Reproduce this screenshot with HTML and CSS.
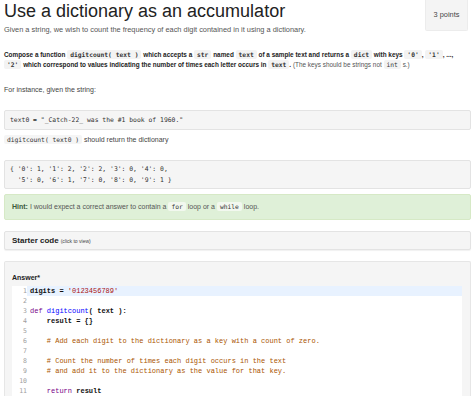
FILE: index.html
```html
<!DOCTYPE html>
<html>
<head>
<meta charset="utf-8">
<link rel="stylesheet" href="styles.css">
</head>
<body>
<div class="page">
  <div class="header">
    <div class="heading">
      <h1 class="title">Use a dictionary as an accumulator</h1>
      <p class="subtitle">Given a string, we wish to count the frequency of each digit contained in it using a dictionary.</p>
    </div>
    <div class="points">3 points</div>
  </div>

  <p class="task"><b>Compose a function <code>digitcount( text )</code> which accepts a <code>str</code> named <code>text</code> of a sample text and returns a <code>dict</code> with keys <code>'0'</code>, <code>'1'</code>, ...,<br><code>'2'</code> which correspond to values indicating the number of times each letter occurs in <code>text</code>.</b> (The keys should be strings not <code>int</code> s.)</p>

  <p class="plain">For instance, given the string:</p>

  <pre class="block one">text0 = "_Catch-22_ was the #1 book of 1960."</pre>

  <p class="plain tight"><code class="bare">digitcount( text0 )</code> should return the dictionary</p>

  <pre class="block two">{ '0': 1, '1': 2, '2': 2, '3': 0, '4': 0,
  '5': 0, '6': 1, '7': 0, '8': 0, '9': 1 }</pre>

  <div class="hint"><b>Hint:</b> I would expect a correct answer to contain a <code>for</code> loop or a <code>while</code> loop.</div>

  <div class="starter"><span class="starter-title">Starter code</span> <span class="starter-note">(click to view)</span></div>

  <div class="answer">
    <div class="answer-label">Answer*</div>
    <div class="editor">
      <div class="line active"><span class="ln">1</span><span class="src">digits = <span class="str">'0123456789'</span></span></div>
      <div class="line"><span class="ln">2</span><span class="src"></span></div>
      <div class="line"><span class="ln">3</span><span class="src"><span class="kw">def</span> <span class="fn">digitcount</span>( text ):</span></div>
      <div class="line"><span class="ln">4</span><span class="src">    result = {}</span></div>
      <div class="line"><span class="ln">5</span><span class="src"></span></div>
      <div class="line"><span class="ln">6</span><span class="src">    <span class="cm"># Add each digit to the dictionary as a key with a count of zero.</span></span></div>
      <div class="line"><span class="ln">7</span><span class="src"></span></div>
      <div class="line"><span class="ln">8</span><span class="src">    <span class="cm"># Count the number of times each digit occurs in the text</span></span></div>
      <div class="line"><span class="ln">9</span><span class="src">    <span class="cm"># and add it to the dictionary as the value for that key.</span></span></div>
      <div class="line"><span class="ln">10</span><span class="src"></span></div>
      <div class="line"><span class="ln">11</span><span class="src">    <span class="kw">return</span> result</span></div>
    </div>
  </div>
</div>
</body>
</html>
```

FILE: styles.css
```css
html, body {
  margin: 0;
  padding: 0;
  background: #ffffff;
}
body {
  font-family: "Liberation Sans", Arial, sans-serif;
  font-size: 7px;
  line-height: 10px;
  color: #333333;
}
.page {
  padding: 0 3px 0 4px;
  width: 467px;
}
.header {
  display: flex;
  justify-content: space-between;
  align-items: flex-start;
}
.heading {
  display: flex;
  flex-direction: column;
}
.title {
  margin: 0;
  font-size: 18px;
  line-height: 22px;
  font-weight: normal;
  color: #222222;
}
.subtitle {
  margin: 3px 0 0 0;
  font-size: 7.4px;
  color: #555555;
}
.points {
  width: 43px;
  height: 31px;
  box-sizing: border-box;
  background: #f4f4f4;
  border: 1px solid #ececec;
  border-top: none;
  border-radius: 0 0 2px 2px;
  display: flex;
  align-items: center;
  justify-content: center;
  color: #444444;
  margin-right: 3px;
  font-size: 7.4px;
}
p {
  margin: 0;
}
.task {
  margin-top: 15px;
  color: #555555;
  font-size: 6.4px;
  white-space: nowrap;
}
.task b {
  color: #222222;
}
code {
  font-family: "DejaVu Sans Mono", "Liberation Mono", monospace;
  font-size: 6.3px;
  background: #f3f3f3;
  padding: 1px 3px;
  border-radius: 2px;
  color: #333333;
}
code.bare {
  background: #f5f5f5;
}
.plain {
  margin-top: 15px;
  color: #444444;
}
.plain.tight {
  margin-top: 5px;
}
.block {
  margin: 15px 0 0 0;
  font-family: "DejaVu Sans Mono", "Liberation Mono", monospace;
  font-size: 6.4px;
  background: #f5f5f5;
  border: 1px solid #e3e3e3;
  border-radius: 2px;
  color: #333333;
  padding: 0 5px;
}
.block.one {
  line-height: 18px;
}
.block.two {
  line-height: 11px;
  padding-top: 3px;
  padding-bottom: 2px;
}
.hint {
  margin-top: 5px;
  background: #dff0d8;
  border: 1px solid #d6e9c6;
  border-radius: 2px;
  padding: 7px 7px;
  color: #555555;
}
.hint b {
  color: #3c5a3c;
}
.hint code {
  background: #f2f8ef;
}
.starter {
  margin-top: 11px;
  background: #f5f5f5;
  border: 1px solid #e3e3e3;
  border-radius: 2px;
  padding: 0 7px;
  height: 19px;
  box-sizing: border-box;
  display: flex;
  align-items: center;
  gap: 2px;
  box-shadow: 0 1px 1px rgba(0,0,0,0.06);
}
.starter-title {
  font-weight: bold;
  font-size: 8px;
  color: #222222;
}
.starter-note {
  font-size: 5px;
  color: #444444;
}
.answer {
  margin-top: 11px;
  background: #f5f5f5;
  border: 1px solid #e6e6e6;
  border-bottom: none;
  border-radius: 2px 2px 0 0;
  padding: 11px 8px 10px 7px;
}
.answer-label {
  font-weight: bold;
  color: #222222;
  line-height: 10px;
}
.editor {
  margin-top: 3px;
  background: #ffffff;
  font-family: "Liberation Mono", "DejaVu Sans Mono", monospace;
  font-size: 7px;
}
.line {
  display: flex;
  height: 10px;
  line-height: 10px;
}
.line.active .src {
  background: #e8f2ff;
}
.ln {
  width: 15px;
  text-align: right;
  color: #a0a0a0;
  font-size: 6.5px;
  flex: none;
  font-family: "DejaVu Sans Mono", monospace;
}
.src {
  flex: 1;
  white-space: pre;
  padding-left: 3px;
  font-weight: bold;
  color: #111111;
}
.kw {
  color: #770088;
  font-weight: normal;
}
.fn {
  color: #0000ff;
  font-weight: normal;
}
.str {
  color: #aa1111;
  font-weight: normal;
}
.cm {
  color: #aa5500;
  font-weight: normal;
}
```
